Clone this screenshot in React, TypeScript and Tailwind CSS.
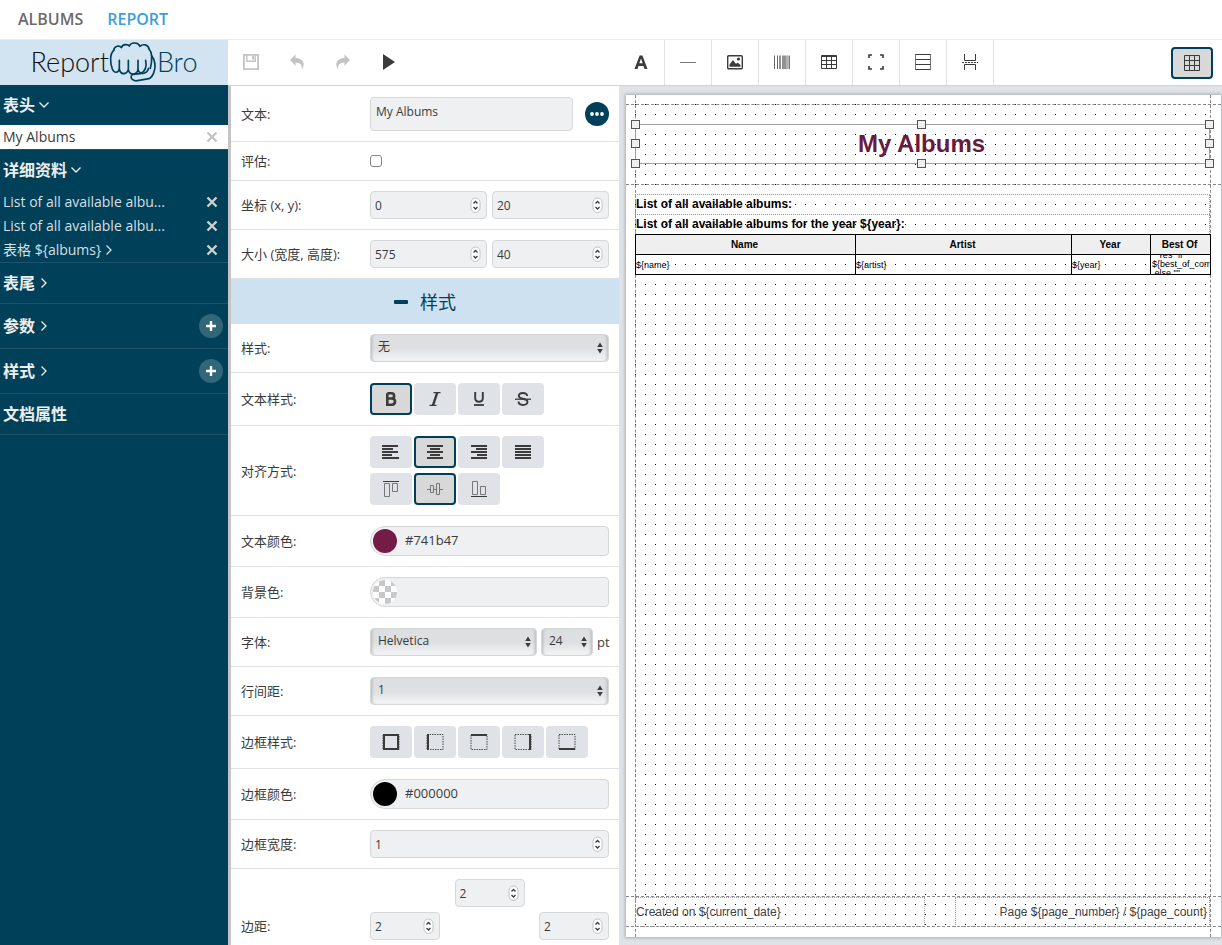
import { useState } from "react";
import type { ReactNode } from "react";

const iconButton = "flex h-8 w-[42px] cursor-pointer items-center justify-center rounded";

const Logo = () => {
  return (
    <a href="#home" aria-label="ReportBro" className="flex h-[45px] items-center justify-center bg-[#d2e3f1] pb-0.5 font-[Lato] text-[27px] leading-none font-light">
      <span className="text-[#111111]">Report</span>
      <svg width="48" height="42" viewBox="260 10 144 126" fill="none" stroke="#004159" strokeWidth="5" strokeLinecap="round" strokeLinejoin="round">
        <path d="M274 38C262 50 263 74 270 94C276 108 288 106 291 94" />
        <path d="M274 38C276 24 292 22 297 30C301 18 317 19 321 25C326 12 348 14 353 26C361 18 378 20 380 34" />
        <path d="M380 34C390 44 390 66 384 92" />
        <path d="M291 68V94C294 112 312 112 318 97V68" />
        <path d="M318 97C323 114 342 112 347 97V68" />
        <path d="M347 97C353 112 373 111 379 92" />
        <path d="M370 68C374 88 368 102 354 108L332 110C324 112 325 122 331 126C337 131 344 130 350 128L380 123C391 119 399 98 398 84C398 72 394 62 388 54" />
      </svg>
      <span className="text-[#004159]">Bro</span>
    </a>
  );
};

const Chevron = ({ open }: { open?: boolean }) => {
  return (
    <svg width="12" height="12" viewBox="0 0 12 12" fill="none" stroke="currentColor" strokeWidth="1.3" className="shrink-0">
      {open ? <path d="M1.5 3.5L6 8L10.5 3.5" /> : <path d="M3.5 1.5L8 6L3.5 10.5" />}
    </svg>
  );
};

const MenuGroup = ({ name, open, add, children }: { name: string; open?: boolean; add?: boolean; children?: ReactNode }) => {
  return (
    <li className="border-b border-[#1d5268]">
      <div className={`flex items-center justify-between pr-[5px] pl-[3px] ${add ? "h-11" : "h-10"}`}>
        <button className="flex cursor-pointer items-center gap-[3px] text-base font-semibold text-[#eeeeee]">
          {name}
          {name !== "文档属性" && <Chevron open={open} />}
        </button>
        {add && (
          <button aria-label={`${name} +`} className="flex size-6 cursor-pointer items-center justify-center rounded-full bg-[#326679]">
            <svg width="12" height="12" viewBox="0 0 12 12" stroke="#ffffff" strokeWidth="2.4">
              <path d="M6 1V11M1 6H11" />
            </svg>
          </button>
        )}
      </div>
      {children && <ul>{children}</ul>}
    </li>
  );
};

const MenuItem = ({ name, active, more }: { name: string; active?: boolean; more?: boolean }) => {
  return (
    <li className={`flex h-6 items-center justify-between pr-2.5 pl-[3px] text-sm ${active ? "bg-white text-[#3b3b3b]" : "text-[#d9dfe2]"}`}>
      <a href="#item" className="flex items-center gap-0.5">
        {name}
        {more && <Chevron />}
      </a>
      <button aria-label={`${name} ×`} className={`cursor-pointer ${active ? "text-[#c4c4c4]" : "text-[#d0d0d0]"}`}>
        <svg width="12" height="12" viewBox="0 0 12 12" stroke="currentColor" strokeWidth="2.4">
          <path d="M1.5 1.5L10.5 10.5M10.5 1.5L1.5 10.5" />
        </svg>
      </button>
    </li>
  );
};

const Row = ({ label, id, children }: { label: string; id?: string; children: ReactNode }) => {
  return (
    <div className="flex items-center border-b border-[#dfe2e7] p-2.5">
      <label htmlFor={id} className="w-[129px] shrink-0 leading-[18px]">
        {label}
      </label>
      <div className="flex-1">{children}</div>
    </div>
  );
};

const NumberInput = ({ id, label, value, className = "flex-1" }: { id?: string; label: string; value: number; className?: string }) => {
  return (
    <div className={`relative ${className}`}>
      <input
        id={id}
        aria-label={label}
        type="text"
        inputMode="numeric"
        defaultValue={value}
        className="block h-7 w-full rounded border border-[#d5d7d9] bg-[#eff0f2] px-1 text-xs"
      />
      <svg width="11" height="17" viewBox="0 0 11 17" className="pointer-events-none absolute top-[6px] right-1.5">
        <rect x="1" y="1" width="9" height="14.5" rx="4.5" fill="#fff" stroke="#c2c2c2" />
        <path d="M3.5 6.5L5.5 4.5L7.5 6.5M3.5 10L5.5 12L7.5 10" fill="none" stroke="#3b3b3b" strokeWidth="1.3" />
      </svg>
    </div>
  );
};

const Select = ({ id, label, options, className = "flex-1" }: { id?: string; label: string; options: string[]; className?: string }) => {
  return (
    <div className={`relative ${className}`}>
      <select
        id={id}
        aria-label={label}
        className="block h-7 w-full appearance-none rounded border border-[#d5d7d9] bg-linear-to-b from-[#dedfe1] from-50% to-[#f4f5f6] pb-0.5 pl-[7px] text-xs shadow-[inset_3px_0_3px_-2px_#b5b7b9,inset_-3px_0_3px_-2px_#b5b7b9]"
      >
        {options.map((option) => (
          <option key={option}>{option}</option>
        ))}
      </select>
      <svg width="6" height="12" viewBox="0 0 6 12" fill="#3b3b3b" className="pointer-events-none absolute top-2 right-1.5">
        <path d="M3 0.5L5.8 5H0.2ZM3 11.5L0.2 7H5.8Z" />
      </svg>
    </div>
  );
};

const ColorInput = ({ id, value }: { id: string; value: string }) => {
  return (
    <div className="flex h-[30px] items-center gap-2 rounded-l-[15px] rounded-r border border-[#d5d7d9] bg-[#eff0f2] pl-0.5">
      <span
        className={`size-6 shrink-0 rounded-full ${value ? "" : "bg-[conic-gradient(#c8c8c8_25%,#ffffff_0_50%,#c8c8c8_0_75%,#ffffff_0)] bg-size-[12px_12px]"}`}
        style={value ? { backgroundColor: value } : undefined}
      />
      <input id={id} type="text" defaultValue={value} className="w-full bg-transparent text-[13px] outline-none" />
    </div>
  );
};

const Toggle = ({ label, on, children }: { label: string; on?: boolean; children: ReactNode }) => {
  const [active, setActive] = useState(!!on);
  return (
    <button
      aria-label={label}
      aria-pressed={active}
      onClick={() => setActive(!active)}
      className={`${iconButton} ${active ? "border-2 border-[#003f59] bg-[#d8d8d8]" : "bg-[#dfe2e7]"}`}
    >
      {children}
    </button>
  );
};

const Lines = ({ rows }: { rows: [number, number][] }) => {
  return (
    <svg width="18" height="14" viewBox="0 0 18 14" stroke="#3b3b3b" strokeWidth="2">
      {rows.map(([from, to], i) => (
        <path key={i} d={`M${from} ${1 + i * 3}H${to}`} />
      ))}
    </svg>
  );
};

const BorderIcon = ({ side }: { side: string }) => {
  return (
    <svg width="18" height="16" viewBox="0 0 18 16" fill="none" stroke="#3b3b3b">
      <rect x="1" y="0.5" width="16" height="15" strokeDasharray="1.5 1" strokeWidth="0.9" />
      <path d={side} strokeWidth="2" />
    </svg>
  );
};

const borders = [
  { name: "all", side: "M2 1H16V15H2Z" },
  { name: "left", side: "M2 0V16" },
  { name: "top", side: "M1 1H17" },
  { name: "right", side: "M16 0V16" },
  { name: "bottom", side: "M1 15H17" },
];

const Properties = () => {
  return (
    <section className="w-[388px] shrink-0 overflow-hidden bg-white pt-px text-[13px] text-[#3b3b3b]">
      <Row label="文本:" id="text">
        <div className="flex items-center gap-3">
          <textarea
            id="text"
            defaultValue="My Albums"
            className="block h-[34px] min-w-0 flex-1 resize-none overflow-hidden rounded border border-[#d5d7d9] bg-[#eff0f2] px-[5px] py-1.5 text-xs"
          />
          <button aria-label="..." className="flex size-6 cursor-pointer items-center justify-center gap-0.5 rounded-full bg-[#004159]">
            <svg width="14" height="4" viewBox="0 0 14 4" fill="#ffffff">
              <circle cx="2" cy="2" r="1.9" />
              <circle cx="7" cy="2" r="1.9" />
              <circle cx="12" cy="2" r="1.9" />
            </svg>
          </button>
        </div>
      </Row>
      <Row label="评估:" id="eval">
        <div className="flex h-[18px] items-center">
          <input id="eval" type="checkbox" className="size-3 appearance-none rounded-[3px] border border-[#858585] bg-white checked:bg-[#004159]" />
        </div>
      </Row>
      <Row label="坐标 (x, y):" id="x">
        <div className="flex gap-[5px]">
          <NumberInput id="x" label="x" value={0} />
          <NumberInput label="y" value={20} />
        </div>
      </Row>
      <Row label="大小 (宽度, 高度):" id="width">
        <div className="flex gap-[5px]">
          <NumberInput id="width" label="宽度" value={575} />
          <NumberInput label="高度" value={40} />
        </div>
      </Row>
      <button className="flex h-[45px] w-full cursor-pointer items-center justify-center gap-3 bg-[#cee1f1] text-lg text-[#004159]">
        <svg width="14" height="4" viewBox="0 0 14 4">
          <rect width="14" height="4" rx="1" fill="#004159" />
        </svg>
        样式
      </button>
      <Row label="样式:" id="style">
        <Select id="style" label="样式" options={["无"]} />
      </Row>
      <Row label="文本样式:">
        <div className="flex gap-0.5">
          <Toggle label="bold" on>
            <svg width="14" height="14" viewBox="0 0 14 14" fill="none" stroke="#3b3b3b" strokeWidth="2.6">
              <path d="M3.3 1.3H7.5C11 1.3 11 6.5 7.5 6.5H3.3H8C12 6.5 12 12.7 8 12.7H3.3V1.3" />
            </svg>
          </Toggle>
          <Toggle label="italic">
            <svg width="14" height="14" viewBox="0 0 14 14" fill="none" stroke="#3b3b3b">
              <path d="M5.5 0.6H12.5M1.5 13.4H8.5" strokeWidth="1.2" />
              <path d="M9.2 0.6L5 13.4" strokeWidth="2.4" />
            </svg>
          </Toggle>
          <Toggle label="underline">
            <svg width="14" height="14" viewBox="0 0 14 14" fill="none" stroke="#3b3b3b">
              <path d="M3.2 0V6C3.2 11 10.8 11 10.8 6V0" strokeWidth="1.9" />
              <path d="M2 13H12" strokeWidth="1.8" />
            </svg>
          </Toggle>
          <Toggle label="strikethrough">
            <svg width="16" height="14" viewBox="0 0 16 14" fill="none" stroke="#3b3b3b">
              <path d="M12.2 4C11.8 0 3.8 0 3.8 4C3.8 8 12.5 5.5 12.5 10C12.5 14 3.5 14 3.5 9.5" strokeWidth="1.9" />
              <path d="M0 7.2H16" strokeWidth="1.3" />
            </svg>
          </Toggle>
        </div>
      </Row>
      <Row label="对齐方式:">
        <div className="flex flex-col gap-[5px]">
          <div className="flex gap-0.5">
            <Toggle label="left">
              <Lines rows={[[0, 16], [0, 11], [0, 16], [0, 10], [0, 17]]} />
            </Toggle>
            <Toggle label="center" on>
              <Lines rows={[[1, 17], [4, 14], [1, 17], [4, 14], [1, 17]]} />
            </Toggle>
            <Toggle label="right">
              <Lines rows={[[1, 17], [6, 17], [1, 17], [7, 17], [1, 17]]} />
            </Toggle>
            <Toggle label="justify">
              <Lines rows={[[1, 17], [1, 17], [1, 17], [1, 17], [1, 17]]} />
            </Toggle>
          </div>
          <div className="flex gap-0.5">
            <Toggle label="top">
              <svg width="16" height="16" viewBox="0 0 16 16" fill="none" stroke="#777777">
                <path d="M0 0.5H16" stroke="#3b3b3b" />
                <path d="M1.5 2.5H6.5V15.5H1.5ZM9.5 2.5H14.5V10.5H9.5Z" />
              </svg>
            </Toggle>
            <Toggle label="middle" on>
              <svg width="16" height="14" viewBox="0 0 16 14" fill="none" stroke="#777777">
                <path d="M0 7.5H3M7 7.5H9M13 7.5H16M3.5 3.5H6.5V10.5H3.5ZM9.5 1.5H12.5V12.5H9.5Z" />
              </svg>
            </Toggle>
            <Toggle label="bottom">
              <svg width="16" height="16" viewBox="0 0 16 16" fill="none" stroke="#777777">
                <path d="M0 15.5H16" stroke="#3b3b3b" />
                <path d="M1.5 0.5H6.5V13.5H1.5ZM9.5 5.5H14.5V13.5H9.5Z" />
              </svg>
            </Toggle>
          </div>
        </div>
      </Row>
      <Row label="文本颜色:" id="textColor">
        <ColorInput id="textColor" value="#741b47" />
      </Row>
      <Row label="背景色:" id="backgroundColor">
        <ColorInput id="backgroundColor" value="" />
      </Row>
      <Row label="字体:" id="font">
        <div className="flex items-center gap-1">
          <Select id="font" label="字体" options={["Helvetica"]} className="w-[167px]" />
          <Select label="24" options={["24"]} className="w-[52px]" />
          <span className="leading-5">pt</span>
        </div>
      </Row>
      <Row label="行间距:" id="lineSpacing">
        <Select id="lineSpacing" label="行间距" options={["1"]} />
      </Row>
      <Row label="边框样式:">
        <div className="flex gap-0.5">
          {borders.map((border) => (
            <Toggle key={border.name} label={border.name}>
              <BorderIcon side={border.side} />
            </Toggle>
          ))}
        </div>
      </Row>
      <Row label="边框颜色:" id="borderColor">
        <ColorInput id="borderColor" value="#000000" />
      </Row>
      <Row label="边框宽度:" id="borderWidth">
        <NumberInput id="borderWidth" label="边框宽度" value={1} />
      </Row>
      <Row label="边距:" id="padding">
        <div className="flex flex-col items-center gap-[5px]">
          <NumberInput id="padding" label="top" value={2} className="w-[70px]" />
          <div className="flex w-full justify-between">
            <NumberInput label="left" value={2} className="w-[70px]" />
            <NumberInput label="right" value={2} className="w-[70px]" />
          </div>
          <NumberInput label="bottom" value={2} className="w-[70px]" />
        </div>
      </Row>
    </section>
  );
};

const elements = [
  {
    name: "text",
    icon: <path d="M1.5 15L6.6 1.5H9.4L14.5 15H11.5L10.5 12H5.5L4.5 15ZM6.3 9.3H9.7L8 4.5Z" fill="#3b3b3b" stroke="none" fillRule="evenodd" />,
  },
  { name: "line", icon: <path d="M0 8.5H16" stroke="#777777" /> },
  {
    name: "image",
    icon: (
      <>
        <rect x="0.7" y="1.7" width="14.6" height="13" rx="1" strokeWidth="1.4" />
        <path d="M2.5 12.8V10.5L6 6L9 10L10.5 8.5L13.5 11V12.8Z" fill="#3b3b3b" stroke="none" />
        <circle cx="11.5" cy="5" r="1.6" fill="#3b3b3b" stroke="none" />
      </>
    ),
  },
  {
    name: "barcode",
    icon: (
      <>
        <path d="M0.5 1.5V15M3.5 1.5V15M13 1.5V15" stroke="#666666" />
        <path d="M6 1.5V15M9 1.5V15M11 1.5V15M15.3 1.5V15" stroke="#777777" strokeWidth="1.6" />
      </>
    ),
  },
  { name: "table", icon: <path d="M0.5 1.5H15.5V14.5H0.5ZM0.5 2.5H15.5M0.5 6.5H15.5M0.5 10.5H15.5M5.5 2V14.5M10.5 2V14.5" /> },
  {
    name: "frame",
    icon: <path d="M1 4V1H4M12 1H15V4M15 12V15H12M4 15H1V12" strokeWidth="1.6" />,
  },
  {
    name: "section",
    icon: (
      <>
        <path d="M0.5 0V16M15.5 0V16" stroke="#777777" />
        <path d="M0.5 0.5H15.5M0.5 5.5H15.5M0.5 10.5H15.5M0.5 15.5H15.5" />
      </>
    ),
  },
  {
    name: "page break",
    icon: (
      <>
        <path d="M0 8.5H16" strokeDasharray="2 1" />
        <path d="M2.5 0V6.5H13.5V0M2.5 16V10.5H13.5V16" />
      </>
    ),
  },
];

const Toolbar = () => {
  return (
    <div className="flex h-[46px] border-b border-[#ced3d8] bg-white">
      <div className="flex w-[390px] shrink-0 items-center pb-px">
        <button aria-label="save" className="flex w-[46px] cursor-pointer justify-center">
          <svg width="16" height="16" viewBox="0 0 16 16" fill="none" stroke="#c4c4c4" strokeWidth="1.8">
            <path d="M0.9 0.9H15.1V15.1H0.9Z" />
            <path d="M3.8 1V7.2H12.2V1" strokeWidth="1.4" />
            <path d="M10 2V5.5" strokeWidth="2" />
          </svg>
        </button>
        <button aria-label="undo" className="flex w-[46px] cursor-pointer justify-center">
          <svg width="16" height="16" viewBox="0 0 16 16" fill="#c4c4c4">
            <path d="M6.5 0.5V4C13 4 17.5 9 12.7 15.5C13.3 11 11.5 8.8 6.5 8.8V12L1 6Z" />
          </svg>
        </button>
        <button aria-label="redo" className="flex w-[46px] cursor-pointer justify-center">
          <svg width="16" height="16" viewBox="0 0 16 16" fill="#c4c4c4">
            <path d="M9.5 0.5V4C3 4 -1.5 9 3.3 15.5C2.7 11 4.5 8.8 9.5 8.8V12L15 6Z" />
          </svg>
        </button>
        <button aria-label="preview" className="flex w-[46px] cursor-pointer justify-center">
          <svg width="12" height="16" viewBox="0 0 12 16" fill="#3b3b3b">
            <path d="M0 0L12 8L0 16Z" />
          </svg>
        </button>
      </div>
      {elements.map((element) => (
        <button key={element.name} aria-label={element.name} className="flex w-[47px] cursor-pointer items-center justify-center border-r border-[#dfe2e7] pb-px">
          <svg width="16" height="16" viewBox="0 0 16 16" fill="none" stroke="#3b3b3b">
            {element.icon}
          </svg>
        </button>
      ))}
      <div className="mr-[9px] ml-auto flex items-center">
        <Toggle label="grid" on>
          <svg width="16" height="16" viewBox="0 0 16 16" fill="none" stroke="#3b3b3b">
            <path d="M0.5 0.5H15.5V15.5H0.5ZM0.5 5.5H15.5M0.5 10.5H15.5M5.5 0.5V15.5M10.5 0.5V15.5" />
          </svg>
        </Toggle>
      </div>
    </div>
  );
};

const handles = [
  "-top-1 -left-1",
  "-top-1 left-[282px]",
  "-top-1 -right-1",
  "top-[15px] -left-1",
  "top-[15px] -right-1",
  "-bottom-1 -left-1",
  "-bottom-1 left-[282px]",
  "-bottom-1 -right-1",
];

const columns = [
  { title: "Name", width: "w-[220px]", value: "${name}" },
  { title: "Artist", width: "w-[216px]", value: "${artist}" },
  { title: "Year", width: "w-[79px]", value: "${year}" },
  { title: "Best Of", width: "w-[60px]", value: "" },
];

// A4 sheet, elements sit at their document coordinates
const Page = () => {
  return (
    <div className="relative h-[842px] w-[595px] shrink-0 bg-white font-['Liberation_Sans',sans-serif] text-black shadow-[0_0_3px_1px_#a8adb2]">
      <div className="absolute top-[9px] right-2.5 bottom-[11px] left-[9px] bg-[conic-gradient(from_270deg_at_1px_1px,#000000_90deg,transparent_0)] bg-size-[10px_10px]" />
      <div className="absolute inset-x-0 top-[9px] h-[81px] border-y border-dashed border-[#888888]" />
      <div className="absolute inset-x-0 top-[801px] h-[31px] border-y border-dashed border-[#888888]" />
      <div className="absolute inset-y-0 right-2.5 left-[9px] border-x border-dashed border-[#888888]" />

      <div className="absolute top-[99px] left-[9px] h-5 w-[575px] border border-b-0 border-dotted border-[#999999] text-xs leading-[18px] font-bold">
        List of all available albums:
      </div>
      <div className="absolute top-[119px] left-[9px] h-5 w-[575px] border border-b-0 border-dotted border-[#999999] text-xs leading-[18px] font-bold">
        {"List of all available albums for the year ${year}:"}
      </div>
      <table className="absolute top-[139px] left-[9px] w-[576px] table-fixed border-collapse">
        <thead>
          <tr className="h-5">
            {columns.map((column) => (
              <th key={column.title} className={`${column.width} border border-black bg-[#efefef] p-0 pr-0.5 text-[10px] leading-[18px] font-bold`}>
                {column.title}
              </th>
            ))}
          </tr>
        </thead>
        <tbody>
          <tr className="h-5">
            {columns.map((column) => (
              <td key={column.title} className="border border-black p-0 text-[9px] leading-[18px]">
                {column.value ? (
                  column.value
                ) : (
                  <div className="flex h-[19px] flex-col justify-center overflow-hidden pl-px leading-[9px] whitespace-pre">
                    <span>{' "Yes" if'}</span>
                    <span>{"${best_of_compilation}"}</span>
                    <span>{' else ""'}</span>
                  </div>
                )}
              </td>
            ))}
          </tr>
        </tbody>
      </table>

      <div className="absolute top-[802px] left-[9px] h-[30px] w-[290px] border border-dotted border-[#999999] text-xs leading-7 text-[#444444]">
        {"Created on ${current_date}"}
      </div>
      <div className="absolute top-[802px] left-[329px] h-[30px] w-[255px] border border-dotted border-[#999999] pr-0.5 text-right text-xs leading-7 text-[#444444]">
        {"Page ${page_number} / ${page_count}"}
      </div>

      <div className="absolute top-[29px] left-[9px] h-10 w-[575px] border border-[#a0a0a0] pr-0.5 text-center text-2xl leading-[38px] font-bold text-[#691a3f]">
        My Albums
        {handles.map((handle) => (
          <span key={handle} className={`absolute -m-px size-[9px] border border-[#555555] bg-[#efefef] ${handle}`} />
        ))}
      </div>
    </div>
  );
};

const App = () => {
  return (
    <div className="flex h-screen flex-col overflow-hidden font-['Open_Sans','Noto_Sans_CJK_SC',sans-serif]">
      <nav className="flex h-10 shrink-0 items-center gap-6 border-b border-[#ececec] bg-white px-[18px] pb-px font-semibold uppercase">
        <a href="#albums" className="text-[#6b6b6b]">Albums</a>
        <a href="#report" className="text-[#3a9fd9]">Report</a>
      </nav>
      <div className="flex min-h-0 flex-1">
        <aside className="w-[228px] shrink-0 bg-[#004159]">
          <Logo />
          <ul>
            <MenuGroup name="表头" open>
              <MenuItem name="My Albums" active />
            </MenuGroup>
            <MenuGroup name="详细资料" open>
              <MenuItem name="List of all available albu..." />
              <MenuItem name="List of all available albu..." />
              <MenuItem name="表格 ${albums}" more />
            </MenuGroup>
            <MenuGroup name="表尾" />
            <MenuGroup name="参数" add />
            <MenuGroup name="样式" add />
            <MenuGroup name="文档属性" />
          </ul>
        </aside>
        <main className="flex min-w-0 flex-1 flex-col">
          <Toolbar />
          <div className="flex min-h-0 flex-1">
            <div className="w-[3px] shrink-0 bg-[#c4c4c4]" />
            <Properties />
            <div className="min-w-0 flex-1 overflow-hidden bg-[#dfe2e7] pt-[9px] pl-[7px]">
              <Page />
            </div>
          </div>
        </main>
      </div>
    </div>
  );
};

export default App;
